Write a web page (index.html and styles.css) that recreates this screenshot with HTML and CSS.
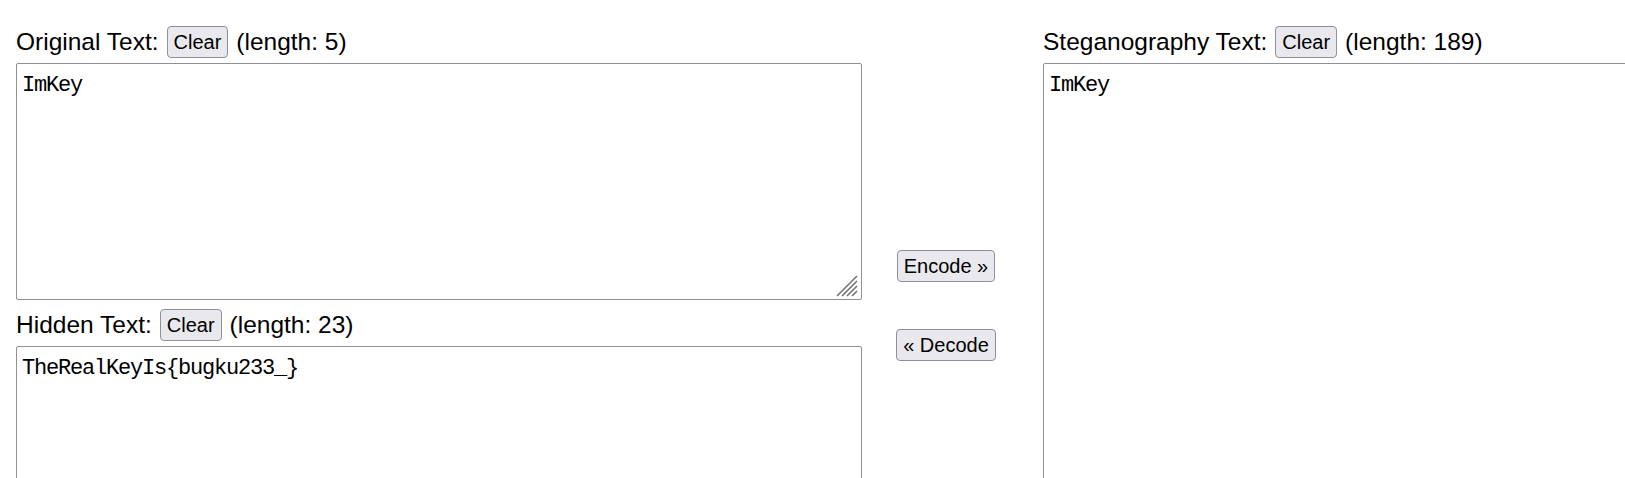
FILE: index.html
```html
<!DOCTYPE html>
<html lang="en">
<head>
    <meta charset="UTF-8">
    <meta name="viewport" content="width=device-width, initial-scale=1.0">
    <title>Steganography</title>
<link rel="stylesheet" href="styles.css">
</head>
<body>
<div class="stego"> <!-- main layout -->

    <!-- left: original + hidden -->
    <div class="col">
        <div class="field-head">
            <span>Original Text:</span>
            <button class="btn">Clear</button>
            <span>(length: 5)</span>
        </div>
        <div class="box">
            <textarea class="txt" spellcheck="false">ImKey</textarea>
            <svg class="grip" width="22" height="22" viewBox="0 0 22 22">
                <path d="M1 21 L21 1 M6 21 L21 6 M11 21 L21 11 M16 21 L21 16"/>
            </svg>
        </div>

        <div class="field-head">
            <span>Hidden Text:</span>
            <button class="btn">Clear</button>
            <span>(length: 23)</span>
        </div>
        <div class="box">
            <textarea class="txt" spellcheck="false">TheRealKeyIs{bugku233_}</textarea>
        </div>
    </div>

    <!-- middle: encode / decode -->
    <div class="actions">
        <button class="btn">Encode &raquo;</button>
        <button class="btn">&laquo; Decode</button>
    </div>

    <!-- right: result -->
    <div class="col col-right">
        <div class="field-head">
            <span>Steganography Text:</span>
            <button class="btn">Clear</button>
            <span>(length: 189)</span>
        </div>
        <div class="box">
            <textarea class="txt txt-tall" spellcheck="false">ImKey</textarea>
        </div>
    </div>

</div>
</body>
</html>
```

FILE: styles.css
```css
* {
    margin: 0;
    padding: 0;
    box-sizing: border-box;
}
html, body {
    overflow: hidden;
    background: #fff;
}
body {
    font-family: "Liberation Sans", Arial, sans-serif;
    font-size: 24.5px;
    color: #000;
}

.stego {
    display: flex;
    padding: 26px 0 0 16px;
}

.col {
    width: 846px;
    flex-shrink: 0;
}
.col-right {
    margin-left: 13px;
}

.field-head {
    display: flex;
    align-items: center;
    gap: 8px;
    height: 32px;
    margin-bottom: 5px;
    white-space: nowrap;
}

.btn {
    font-family: "Liberation Sans", Arial, sans-serif;
    font-size: 20px;
    color: #000;
    height: 32px;
    padding: 0 6px;
    background: #e9e9ed;
    border: 1px solid #8f8f9d;
    border-radius: 4px;
    cursor: pointer;
}
.btn:hover {
    background: #d0d0d7;
}

.box {
    position: relative;     /* for the grip overlay */
    margin-bottom: 9px;
}

.txt {
    display: block;
    width: 846px;
    height: 237px;
    padding: 9px 5px 2px;
    border: 1px solid #8f8f9d;
    border-radius: 2px;
    font-family: "Liberation Mono", "Courier New", monospace;
    font-size: 22px;
    letter-spacing: -1.2px;
    line-height: 1.2;
    color: #000;
    background: #fff;
    resize: none;
    outline: none;
}
.txt-tall {
    height: 521px;
}

.grip {
    position: absolute;
    right: 4px;
    bottom: 3px;
    stroke: #6e6e6e;
    stroke-width: 1.5;
    fill: none;
}

.actions {
    width: 168px;
    flex-shrink: 0;
    display: flex;
    flex-direction: column;
    align-items: center;
    justify-content: center;
    gap: 47px;
    padding-bottom: 8px;
}
```
